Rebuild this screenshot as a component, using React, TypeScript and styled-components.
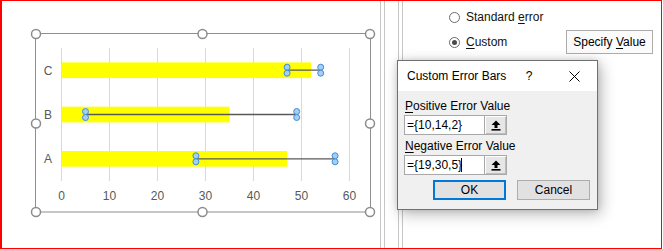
import React from 'react';
import styled, { createGlobalStyle } from 'styled-components';

const GlobalStyle = createGlobalStyle`
  html, body { margin: 0; padding: 0; background: #fff; }
  body { font-family: "Liberation Sans", Arial, sans-serif; font-size: 12px; color: #000; }
`;

const Frame = styled.div`
  position: relative;
  box-sizing: border-box;
  width: 662px;
  height: 249px;
  border: solid #ff0000;
  border-width: 1px 1px 1px 2px;
  display: flex;
  overflow: hidden;
  background: #fff;
`;

const ChartPane = styled.div`
  flex: none;
  width: 378px;
  height: 100%;
`;

const Splitter = styled.div`
  flex: none;
  box-sizing: border-box;
  width: 5px;
  height: 100%;
  border-left: 1px solid #c6c6c6;
  border-right: 1px solid #c6c6c6;
`;

const SplitGap = styled.div`
  flex: none;
  width: 13px;
`;

const Options = styled.div`
  flex: 1;
  display: flex;
  flex-direction: column;
  gap: 1px;
  padding: 4px 8px 0 46px;
`;

const OptionRow = styled.div`
  display: flex;
  align-items: center;
  justify-content: space-between;
  height: 24px;
`;

const RadioLabel = styled.label`
  display: flex;
  align-items: center;
  gap: 6px;
  color: #111;
`;

const Radio = styled.span<{ $checked?: boolean }>`
  box-sizing: border-box;
  width: 11px;
  height: 11px;
  border-radius: 50%;
  border: 1px solid #6b6b6b;
  background: #fff;
  display: flex;
  align-items: center;
  justify-content: center;
  &::after {
    content: '';
    width: 5px;
    height: 5px;
    border-radius: 50%;
    background: ${(p) => (p.$checked ? '#4a4a4a' : 'transparent')};
  }
`;

const U = styled.span`
  text-decoration: underline;
  text-underline-offset: 2px;
`;

const PanelButton = styled.button`
  box-sizing: border-box;
  width: 87px;
  height: 24px;
  border: 1px solid #adadad;
  background: #fbfbfb;
  font: inherit;
  color: #000;
  padding: 0;
`;

const Dialog = styled.div`
  position: absolute;
  left: 395px;
  top: 59px;
  box-sizing: border-box;
  width: 201px;
  border: 1px solid #707070;
  background: #f0f0f0;
  box-shadow: 3px 4px 14px rgba(0, 0, 0, 0.28), 0 0 6px rgba(0, 0, 0, 0.12);
`;

const TitleBar = styled.div`
  display: flex;
  align-items: center;
  height: 30px;
  background: #fff;
  padding-left: 9px;
`;

const Title = styled.span`
  flex: 1;
`;

const HelpButton = styled.span`
  width: 30px;
  text-align: center;
`;

const CloseButton = styled.span`
  width: 46px;
  margin-left: 7px;
  display: flex;
  justify-content: center;
  align-items: center;
`;

const DialogBody = styled.div`
  display: flex;
  flex-direction: column;
  padding: 7px 7px 9px 6px;
`;

const FieldLabel = styled.div<{ $gap?: number }>`
  height: 16px;
  line-height: 16px;
  padding-left: 1px;
  margin-top: ${(p) => p.$gap ?? 0}px;
  margin-bottom: 1px;
`;

const FieldRow = styled.div`
  display: flex;
  height: 20px;
`;

const TextBox = styled.div`
  box-sizing: border-box;
  width: 81px;
  height: 20px;
  border: 1px solid #a8a8a8;
  background: #fff;
  padding-left: 2px;
  line-height: 18px;
  display: flex;
  align-items: center;
`;

const Caret = styled.span`
  display: inline-block;
  width: 1px;
  height: 14px;
  background: #000;
  margin-left: -1px;
`;

const RefButton = styled.div`
  box-sizing: border-box;
  width: 22px;
  height: 20px;
  border: 1px solid #a8a8a8;
  border-left: none;
  background: #e6e6e6;
  box-shadow: inset 1px 1px 0 #fff, inset -1px -1px 0 #bdbdbd;
  display: flex;
  align-items: center;
  justify-content: center;
`;

const ButtonRow = styled.div`
  display: flex;
  justify-content: flex-end;
  gap: 11px;
  margin-top: 5px;
`;

const DialogButton = styled.button<{ $default?: boolean }>`
  box-sizing: border-box;
  width: 73px;
  height: 20px;
  padding: 0;
  font: inherit;
  color: #000;
  background: #e1e1e1;
  border: ${(p) => (p.$default ? '2px solid #0078d7' : '1px solid #adadad')};
`;

const X0 = 61.5;
const UNIT = 4.8;

const series = [
  { name: 'C', value: 52, plus: 2, minus: 5, cy: 70.2 },
  { name: 'B', value: 35, plus: 14, minus: 30, cy: 114.5 },
  { name: 'A', value: 47, plus: 10, minus: 19, cy: 158.8 },
];

const handles: [number, number][] = [
  [36, 34], [202.5, 34], [370, 34],
  [36, 123.5], [370, 123.5],
  [36, 212], [202.5, 212], [370, 212],
];

const Marker: React.FC<{ x: number; y: number }> = ({ x, y }) => (
  <g fill="#a9cdef" stroke="#3b8ede" strokeWidth={1}>
    <circle cx={x} cy={y - 3} r={3} />
    <circle cx={x} cy={y + 3} r={3} />
  </g>
);

const Chart: React.FC = () => (
  <svg width={378} height={247} viewBox="2 1 378 247">
    <rect x={35.5} y={33.5} width={335} height={178.5} fill="none" stroke="#8f8f8f" strokeWidth={1} />
    {[0, 1, 2, 3, 4, 5, 6].map((i) => (
      <line key={i} x1={X0 + 48 * i} x2={X0 + 48 * i} y1={48} y2={181} stroke="#d9d9d9" strokeWidth={1} />
    ))}
    {series.map((s) => (
      <rect key={s.name} x={X0} y={s.cy - 7.8} width={s.value * UNIT} height={15.7} fill="#ffff00" />
    ))}
    {series.map((s) => {
      const x1 = X0 + (s.value - s.minus) * UNIT;
      const x2 = X0 + (s.value + s.plus) * UNIT;
      return (
        <g key={s.name}>
          <line x1={x1} x2={x2} y1={s.cy} y2={s.cy} stroke="#595959" strokeWidth={1.3} />
          <Marker x={x1} y={s.cy} />
          <Marker x={x2} y={s.cy} />
        </g>
      );
    })}
    <g fontFamily='"Liberation Sans", Arial, sans-serif' fontSize={12} fill="#595959" textAnchor="middle">
      {series.map((s) => (
        <text key={s.name} x={48} y={s.cy + 4.3}>{s.name}</text>
      ))}
      {[0, 10, 20, 30, 40, 50, 60].map((v, i) => (
        <text key={v} x={X0 + 48 * i} y={200.3}>{v}</text>
      ))}
    </g>
    {handles.map(([x, y], i) => (
      <circle key={i} cx={x} cy={y} r={4.5} fill="#fff" stroke="#8c8c8c" strokeWidth={1.5} />
    ))}
  </svg>
);

const UpArrow: React.FC = () => (
  <svg width={10} height={11} viewBox="0 0 10 11">
    <path d="M5 0.5 L9.5 5 H6.5 V8 H3.5 V5 H0.5 Z" fill="#000" />
    <rect x={0.5} y={9} width={9} height={1.6} fill="#000" />
  </svg>
);

const CloseIcon: React.FC = () => (
  <svg width={11} height={11} viewBox="0 0 11 11">
    <path d="M0.5 0.5 L10.5 10.5 M10.5 0.5 L0.5 10.5" stroke="#000" strokeWidth={1} />
  </svg>
);

export default function App() {
  return (
    <>
      <GlobalStyle />
      <Frame>
        <ChartPane>
          <Chart />
        </ChartPane>
        <Splitter />
        <SplitGap />
        <Splitter />
        <Options>
          <OptionRow>
            <RadioLabel>
              <Radio />
              <span>Standard <U>e</U>rror</span>
            </RadioLabel>
          </OptionRow>
          <OptionRow>
            <RadioLabel>
              <Radio $checked />
              <span><U>C</U>ustom</span>
            </RadioLabel>
            <PanelButton>Specify <U>V</U>alue</PanelButton>
          </OptionRow>
        </Options>
        <Dialog>
          <TitleBar>
            <Title>Custom Error Bars</Title>
            <HelpButton>?</HelpButton>
            <CloseButton><CloseIcon /></CloseButton>
          </TitleBar>
          <DialogBody>
            <FieldLabel><U>P</U>ositive Error Value</FieldLabel>
            <FieldRow>
              <TextBox>={'{'}10,14,2{'}'}</TextBox>
              <RefButton><UpArrow /></RefButton>
            </FieldRow>
            <FieldLabel $gap={3}><U>N</U>egative Error Value</FieldLabel>
            <FieldRow>
              <TextBox>={'{'}19,30,5{'}'}<Caret /></TextBox>
              <RefButton><UpArrow /></RefButton>
            </FieldRow>
            <ButtonRow>
              <DialogButton $default>OK</DialogButton>
              <DialogButton>Cancel</DialogButton>
            </ButtonRow>
          </DialogBody>
        </Dialog>
      </Frame>
    </>
  );
}
